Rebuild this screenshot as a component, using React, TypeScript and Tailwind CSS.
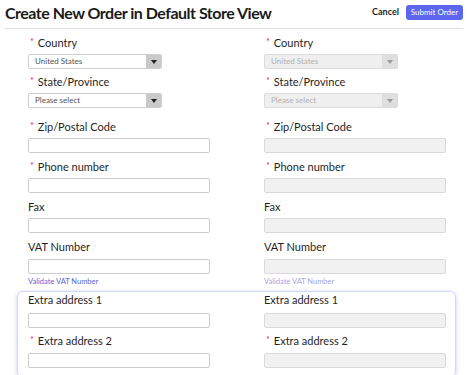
import React from 'react';

type FieldProps = {
  label: string;
  required?: boolean;
  disabled?: boolean;
};

const Label: React.FC<FieldProps> = ({ label, required }) => (
  <div className="h-[16px] leading-[16px] text-[11px] text-[#1f1f1f] flex items-center">
    {required && <span className="text-[#e0245e] text-[9px] ml-[2px] mr-[4px] -mt-[2px]">*</span>}
    <span>{label}</span>
  </div>
);

const SelectField: React.FC<FieldProps & { value: string }> = ({ label, required, disabled, value }) => (
  <div>
    <Label label={label} required={required} />
    <div
      className={`mt-[3px] h-[15px] w-[134px] flex border rounded-[2px] overflow-hidden ${
        disabled ? 'border-[#dcdcdc] bg-[#efefef]' : 'border-[#cfcfcf] bg-white'
      }`}
    >
      <span
        className={`flex-1 pl-[6px] text-[8px] leading-[13px] ${disabled ? 'text-[#b0b0b0]' : 'text-[#555]'}`}
      >
        {value}
      </span>
      <span
        className={`w-[15px] flex items-center justify-center ${disabled ? 'bg-[#dedede]' : 'bg-[#c9c9c9]'}`}
      >
        <svg width="6" height="4" viewBox="0 0 6 4">
          <path d="M0 0h6L3 4z" fill={disabled ? '#9a9a9a' : '#222'} />
        </svg>
      </span>
    </div>
  </div>
);

const InputField: React.FC<FieldProps & { gap?: string }> = ({ label, required, disabled, gap = 'mt-[3px]' }) => (
  <div>
    <Label label={label} required={required} />
    <div
      className={`${gap} h-[15px] w-[182px] border rounded-[2px] ${
        disabled ? 'border-[#dadada] bg-[#f1f1f1]' : 'border-[#cccccc] bg-white'
      }`}
    />
  </div>
);

const Row: React.FC<{ className?: string; children: React.ReactNode }> = ({ className = '', children }) => (
  <div className={`grid grid-cols-[236px_200px] ${className}`}>{children}</div>
);

export default function App() {
  return (
    <div className="w-[474px] h-[375px] overflow-hidden bg-white font-['Lato',sans-serif]">
      <header className="mx-[5px] w-[458px] h-[29px] border-b border-[#dedede] flex items-center justify-between">
        <h1 className="text-[16px] font-bold tracking-[-0.5px] text-[#1a1a1a] -mt-[3px]">
          Create New Order in Default Store View
        </h1>
        <div className="flex items-center -mt-[4px]">
          <button className="text-[9px] font-bold text-[#1f1f1f] mr-[7px]">Cancel</button>
          <button className="h-[15px] w-[57px] rounded-[3px] bg-[#5c66ee] text-white text-[8px]">Submit Order</button>
        </div>
      </header>

      <div className="pl-[28px] pt-[6px]">
        <Row>
          <SelectField label="Country" required value="United States" />
          <SelectField label="Country" required disabled value="United States" />
        </Row>
        <Row className="mt-[5px]">
          <SelectField label="State/Province" required value="Please select" />
          <SelectField label="State/Province" required disabled value="Please select" />
        </Row>
        <Row className="mt-[11px]">
          <InputField label="Zip/Postal Code" required />
          <InputField label="Zip/Postal Code" required disabled />
        </Row>
        <Row className="mt-[6px]">
          <InputField label="Phone number" required />
          <InputField label="Phone number" required disabled />
        </Row>
        <Row className="mt-[6px]">
          <InputField label="Fax" />
          <InputField label="Fax" disabled />
        </Row>
        <Row className="mt-[6px]">
          <InputField label="VAT Number" gap="mt-[4px]" />
          <InputField label="VAT Number" disabled gap="mt-[4px]" />
        </Row>
        <Row className="mt-[3px]">
          <a className="h-[10px] leading-[10px] text-[7.5px] text-[#5d63d6]">Validate VAT Number</a>
          <a className="h-[10px] leading-[10px] text-[7.5px] text-[#a3a7e8]">Validate VAT Number</a>
        </Row>
      </div>

      <div className="mt-[4px] ml-[17px] w-[439px] pl-[10px] pb-[9px] border border-[#d4d6f6] rounded-[6px] shadow-[0_1px_4px_rgba(99,102,241,0.35)]">
        <Row>
          <InputField label="Extra address 1" gap="mt-[5px]" />
          <InputField label="Extra address 1" disabled gap="mt-[5px]" />
        </Row>
        <Row className="mt-[5px]">
          <InputField label="Extra address 2" required gap="mt-[4px]" />
          <InputField label="Extra address 2" required disabled gap="mt-[4px]" />
        </Row>
      </div>
    </div>
  );
}
